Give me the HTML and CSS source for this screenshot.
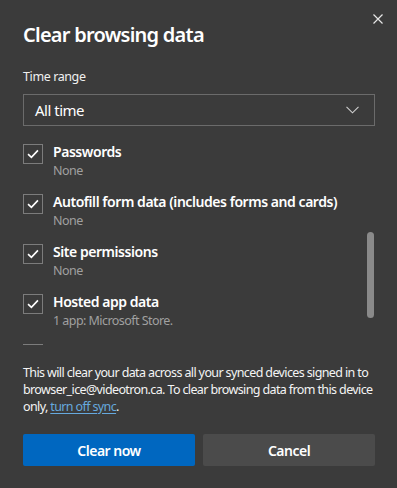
FILE: index.html
```html
<!DOCTYPE html>
<html lang="en">
<head>
<meta charset="utf-8">
<title>Clear browsing data</title>
<link rel="stylesheet" href="styles.css">
</head>
<body>
<div class="dialog">
  <button class="close" aria-label="Close">
    <svg width="10" height="10" viewBox="0 0 10 10"><path d="M0.5 0.5 L9.5 9.5 M9.5 0.5 L0.5 9.5" stroke="#e6e6e6" stroke-width="1.2" fill="none"/></svg>
  </button>
  <h1 class="title">Clear browsing data</h1>
  <div class="field-label">Time range</div>
  <div class="select">
    <span>All time</span>
    <svg width="13" height="8" viewBox="0 0 13 8"><path d="M0.5 0.8 L6.5 6.8 L12.5 0.8" stroke="#cfcfcf" stroke-width="1.1" fill="none"/></svg>
  </div>
  <div class="list-wrap">
    <ul class="list">
      <li class="item">
        <span class="box"><svg width="20" height="20" viewBox="0 0 20 20"><path d="M4.5 10.2 L8.2 13.8 L15.5 6" stroke="#fff" stroke-width="1.8" fill="none"/></svg></span>
        <div class="text"><div class="label">Passwords</div><div class="sub">None</div></div>
      </li>
      <li class="item">
        <span class="box"><svg width="20" height="20" viewBox="0 0 20 20"><path d="M4.5 10.2 L8.2 13.8 L15.5 6" stroke="#fff" stroke-width="1.8" fill="none"/></svg></span>
        <div class="text"><div class="label">Autofill form data (includes forms and cards)</div><div class="sub">None</div></div>
      </li>
      <li class="item">
        <span class="box"><svg width="20" height="20" viewBox="0 0 20 20"><path d="M4.5 10.2 L8.2 13.8 L15.5 6" stroke="#fff" stroke-width="1.8" fill="none"/></svg></span>
        <div class="text"><div class="label">Site permissions</div><div class="sub">None</div></div>
      </li>
      <li class="item">
        <span class="box"><svg width="20" height="20" viewBox="0 0 20 20"><path d="M4.5 10.2 L8.2 13.8 L15.5 6" stroke="#fff" stroke-width="1.8" fill="none"/></svg></span>
        <div class="text"><div class="label">Hosted app data</div><div class="sub">1 app: Microsoft Store.</div></div>
      </li>
      <li class="item">
        <span class="box"></span>
      </li>
    </ul>
    <div class="scrollbar"></div>
  </div>
  <p class="note">This will clear your data across all your synced devices signed in to browser_ice@videotron.ca. To clear browsing data from this device only, <a href="#" class="link">turn off sync</a>.</p>
  <div class="actions">
    <button class="btn primary">Clear now</button>
    <button class="btn secondary">Cancel</button>
  </div>
</div>
</body>
</html>
```

FILE: styles.css
```css
* { box-sizing: border-box; }
html, body { margin: 0; padding: 0; }
body {
  background: #3b3b3b;
  color: #ffffff;
  font-family: "Noto Sans", "Open Sans", sans-serif;
  width: 397px;
  height: 488px;
  overflow: hidden;
}
.dialog {
  position: relative;
  padding: 21px 22px 0 23px;
}
.close {
  position: absolute;
  top: 13px;
  right: 13px;
  width: 12px;
  height: 12px;
  padding: 1px;
  border: 0;
  background: none;
  display: flex;
  align-items: center;
  justify-content: center;
}
.title {
  margin: 0;
  font-size: 20px;
  line-height: 28px;
  font-weight: 600;
  letter-spacing: -0.75px;
}
.field-label {
  margin-top: 19px;
  font-size: 12.5px;
  line-height: 18px;
  letter-spacing: -0.4px;
  color: #f0f0f0;
}
.select {
  margin-top: 8px;
  height: 32px;
  border: 1px solid #6b6b6b;
  display: flex;
  align-items: center;
  justify-content: space-between;
  padding: 0 15px 0 11px;
  font-size: 15px;
  line-height: 30px;
  letter-spacing: -0.5px;
}
.list-wrap {
  position: relative;
  margin-top: 10px;
  height: 209px;
  overflow: hidden;
}
.list {
  list-style: none;
  margin: 0;
  padding: 8px 0 0;
}
.item {
  display: flex;
  gap: 10px;
  height: 50px;
}
.box {
  flex: none;
  width: 20px;
  height: 20px;
  border: 1px solid #7c7c7c;
  display: flex;
  align-items: center;
  justify-content: center;
}
.box svg { display: block; }
.label {
  font-size: 14px;
  line-height: 16px;
  font-weight: 600;
  letter-spacing: -0.45px;
}
.sub {
  margin-top: 2px;
  font-size: 12.5px;
  line-height: 18px;
  letter-spacing: -0.55px;
  color: #a0a0a0;
}
.scrollbar {
  position: absolute;
  top: 96px;
  right: 1px;
  width: 7px;
  height: 86px;
  border-radius: 4px;
  background: #8a8a8a;
}
.note {
  margin: 19px 0 0;
  font-size: 12.5px;
  line-height: 17px;
  letter-spacing: -0.62px;
  color: #f4f4f4;
}
.link {
  color: #66a9de;
  text-decoration: underline;
  text-underline-offset: 2px;
}
.actions {
  margin-top: 19px;
  display: flex;
  gap: 8px;
}
.btn {
  flex: 1;
  height: 32px;
  border: 0;
  border-radius: 2px;
  color: #fff;
  font-family: inherit;
  font-size: 14px;
  font-weight: 600;
  letter-spacing: -0.5px;
}
.primary { background: #0067c0; }
.secondary { background: #4b4b4b; }
```
